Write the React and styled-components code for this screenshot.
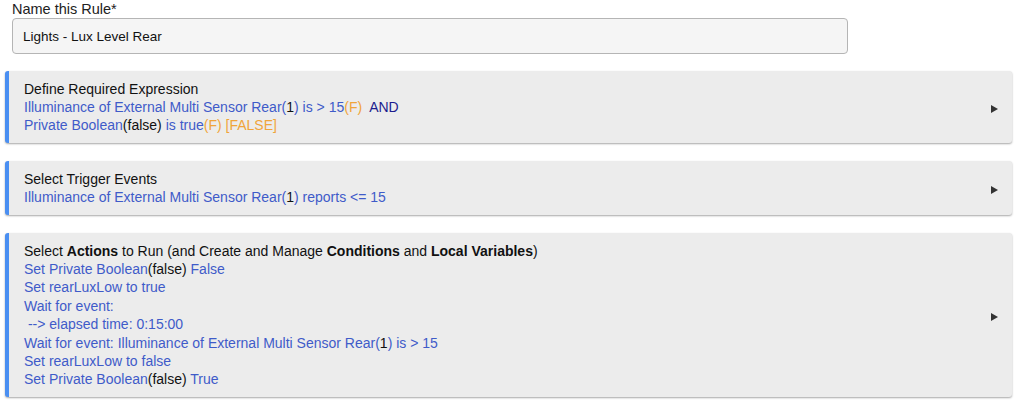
import React from "react";
import styled, { createGlobalStyle } from "styled-components";

const Global = createGlobalStyle`
  html, body { margin: 0; padding: 0; background: #fff; }
  body { font-family: "Liberation Sans", Arial, sans-serif; font-size: 14px; color: #111; }
`;

const Page = styled.div`
  padding: 0 12px 0 5px;
  width: 1007px;
  display: flex;
  flex-direction: column;
`;

const Field = styled.div`
  margin-left: 7px;
  display: flex;
  flex-direction: column;
  margin-bottom: 17px;
`;

const Label = styled.label`
  font-size: 14.5px;
  line-height: 18px;
  color: #222;
`;

const Input = styled.div`
  width: 836px;
  height: 36px;
  box-sizing: border-box;
  border: 1px solid #b5b5b5;
  border-radius: 4px;
  background: #f5f5f5;
  padding: 0 10px;
  display: flex;
  align-items: center;
  font-size: 13.5px;
  color: #111;
`;

const Panel = styled.div`
  display: flex;
  align-items: center;
  background: #ececec;
  border-left: 4px solid #4a8ff2;
  border-radius: 3px;
  box-shadow: 0 1px 2px rgba(0, 0, 0, 0.35);
  padding: 8.5px 14px 8.5px 15px;
  margin-bottom: 18px;
`;

const Body = styled.div`
  flex: 1;
  display: flex;
  flex-direction: column;
  line-height: 18.4px;
`;

const Title = styled.div`
  color: #111;
  b { font-weight: bold; }
`;

const Line = styled.div`
  color: #3f5bc9;
  white-space: pre;
`;

const Dark = styled.span`
  color: #111;
`;

const Orange = styled.span`
  color: #f0a43a;
`;

const Navy = styled.span`
  color: #1c1c8e;
`;

const Arrow = styled.span`
  width: 0;
  height: 0;
  margin-top: 4px;
  border-top: 4px solid transparent;
  border-bottom: 4px solid transparent;
  border-left: 7px solid #333;
`;

function Section({ title, children }) {
  return (
    <Panel>
      <Body>
        <Title>{title}</Title>
        {children}
      </Body>
      <Arrow />
    </Panel>
  );
}

export default function App() {
  return (
    <>
      <Global />
      <Page>
        <Field>
          <Label>Name this Rule*</Label>
          <Input>Lights - Lux Level Rear</Input>
        </Field>

        <Section title="Define Required Expression">
          <Line>
            Illuminance of External Multi Sensor Rear(<Dark>1</Dark>) is &gt; 15<Orange>(F)</Orange>{"  "}<Navy>AND</Navy>
          </Line>
          <Line>
            Private Boolean<Dark>(false)</Dark> is true<Orange>(F)</Orange> <Orange>[FALSE]</Orange>
          </Line>
        </Section>

        <Section title="Select Trigger Events">
          <Line>
            Illuminance of External Multi Sensor Rear(<Dark>1</Dark>) reports &lt;= 15
          </Line>
        </Section>

        <Section
          title={
            <>
              Select <b>Actions</b> to Run (and Create and Manage <b>Conditions</b> and <b>Local Variables</b>)
            </>
          }
        >
          <Line>
            Set Private Boolean<Dark>(false)</Dark> False
          </Line>
          <Line>Set rearLuxLow to true</Line>
          <Line>Wait for event:</Line>
          <Line> --&gt; elapsed time: 0:15:00</Line>
          <Line>
            Wait for event: Illuminance of External Multi Sensor Rear(<Dark>1</Dark>) is &gt; 15
          </Line>
          <Line>Set rearLuxLow to false</Line>
          <Line>
            Set Private Boolean<Dark>(false)</Dark> True
          </Line>
        </Section>
      </Page>
    </>
  );
}
